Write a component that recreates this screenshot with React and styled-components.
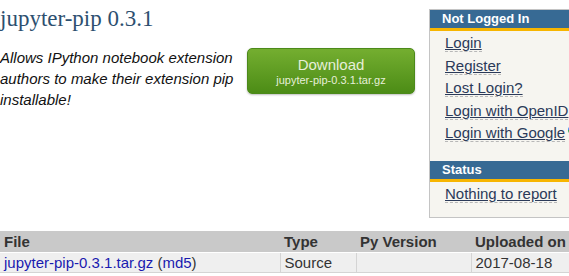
import React from 'react'
import styled, { createGlobalStyle } from 'styled-components'

const Global = createGlobalStyle`
  html, body {
    margin: 0;
    padding: 0;
    background: #fff;
    overflow: hidden;
  }
  body {
    font-family: "Liberation Sans", Arial, sans-serif;
    color: #222;
  }
`

const Page = styled.div`
  width: 569px;
  overflow: hidden;
`

const Top = styled.div`
  display: flex;
  align-items: flex-start;
`

const Main = styled.div`
  width: 429px;
  flex: none;
`

const Title = styled.h1`
  margin: 0;
  padding: 5px 0 0 0;
  font-family: "Liberation Serif", "Times New Roman", serif;
  font-weight: normal;
  font-size: 23px;
  line-height: 27px;
  color: #2d4f6f;
`

const Intro = styled.div`
  display: flex;
  align-items: flex-start;
  gap: 10px;
  margin-top: 15px;
`

const Summary = styled.p`
  margin: 0;
  width: 237px;
  font-style: italic;
  font-size: 15px;
  line-height: 21px;
  color: #111;
`

const DownloadButton = styled.a`
  display: flex;
  flex-direction: column;
  align-items: center;
  justify-content: center;
  width: 166px;
  height: 44px;
  margin-top: 1px;
  border-radius: 5px;
  border: 1px solid #4c8a1a;
  background: linear-gradient(#74ae30, #4c8c16);
  color: #e6efd9;
  text-decoration: none;
  box-shadow: 0 1px 2px rgba(0, 0, 0, 0.25);
`

const ButtonLabel = styled.span`
  font-size: 15px;
  line-height: 17px;
`

const ButtonFile = styled.span`
  font-size: 11px;
  line-height: 14px;
`

const Sidebar = styled.div`
  width: 160px;
  flex: none;
  margin-top: 9px;
  background: #f6f5f0;
  border: 1px solid #c4c4c4;
  padding-bottom: 12px;
`

const BoxHeader = styled.div`
  background: #376a94;
  color: #fff;
  font-weight: bold;
  font-size: 13px;
  line-height: 18px;
  padding: 0 12px;
  border-bottom: 3px solid #f7b500;
  margin-top: ${({ $gap }) => $gap || 0}px;
`

const LinkList = styled.ul`
  list-style: none;
  margin: 0;
  padding: 1px 0 0 15px;
`

const Item = styled.li`
  line-height: 22.5px;
  font-size: 15px;
  white-space: nowrap;
`

const SideLink = styled.a`
  color: #2b3a59;
  text-decoration: underline;
  border-bottom: 1px dashed #b8b8b8;
`

const GoogleMark = styled.span`
  display: inline-block;
  width: 8px;
  height: 8px;
  margin-left: 3px;
  border-radius: 50%;
  background: conic-gradient(#ea4335 0 25%, #fbbc05 25% 50%, #34a853 50% 75%, #4285f4 75%);
  vertical-align: 4px;
`

const Files = styled.table`
  margin-top: 13px;
  width: 569px;
  table-layout: fixed;
  border-collapse: collapse;
  font-size: 15px;
`

const Head = styled.th`
  box-sizing: border-box;
  background: #c9c9c9;
  color: #333;
  text-align: left;
  font-weight: bold;
  padding: 2px 4px 1px;
  line-height: 18px;
  white-space: nowrap;
  width: ${({ $w }) => ($w ? `${$w}px` : 'auto')};
`

const Cell = styled.td`
  background: #efefef;
  color: #333;
  padding: 1px 4px 0;
  line-height: 18px;
  white-space: nowrap;
  border-left: ${({ $first }) => ($first ? 'none' : '1px solid #d4d4d4')};
  border-bottom: 1px solid #d4d4d4;
  border-top: 1px solid #fff;
`

const FileLink = styled.a`
  color: #1a1ab0;
  text-decoration: none;
`

const links = ['Login', 'Register', 'Lost Login?', 'Login with OpenID']

export default function App() {
  return (
    <Page>
      <Global />
      <Top>
        <Main>
          <Title>jupyter-pip 0.3.1</Title>
          <Intro>
            <Summary>
              Allows IPython notebook extension authors to make their extension pip installable!
            </Summary>
            <DownloadButton href="#">
              <ButtonLabel>Download</ButtonLabel>
              <ButtonFile>jupyter-pip-0.3.1.tar.gz</ButtonFile>
            </DownloadButton>
          </Intro>
        </Main>
        <Sidebar>
          <BoxHeader>Not Logged In</BoxHeader>
          <LinkList>
            {links.map((l) => (
              <Item key={l}>
                <SideLink href="#">{l}</SideLink>
              </Item>
            ))}
            <Item>
              <SideLink href="#">Login with Google</SideLink>
              <GoogleMark />
            </Item>
          </LinkList>
          <BoxHeader $gap={16}>Status</BoxHeader>
          <LinkList>
            <Item>
              <SideLink href="#">Nothing to report</SideLink>
            </Item>
          </LinkList>
        </Sidebar>
      </Top>
      <Files>
        <thead>
          <tr>
            <Head $w={280}>File</Head>
            <Head $w={76}>Type</Head>
            <Head $w={115}>Py Version</Head>
            <Head>Uploaded on</Head>
          </tr>
        </thead>
        <tbody>
          <tr>
            <Cell $first>
              <FileLink href="#">jupyter-pip-0.3.1.tar.gz</FileLink> (<FileLink href="#">md5</FileLink>)
            </Cell>
            <Cell>Source</Cell>
            <Cell></Cell>
            <Cell>2017-08-18</Cell>
          </tr>
        </tbody>
      </Files>
    </Page>
  )
}
